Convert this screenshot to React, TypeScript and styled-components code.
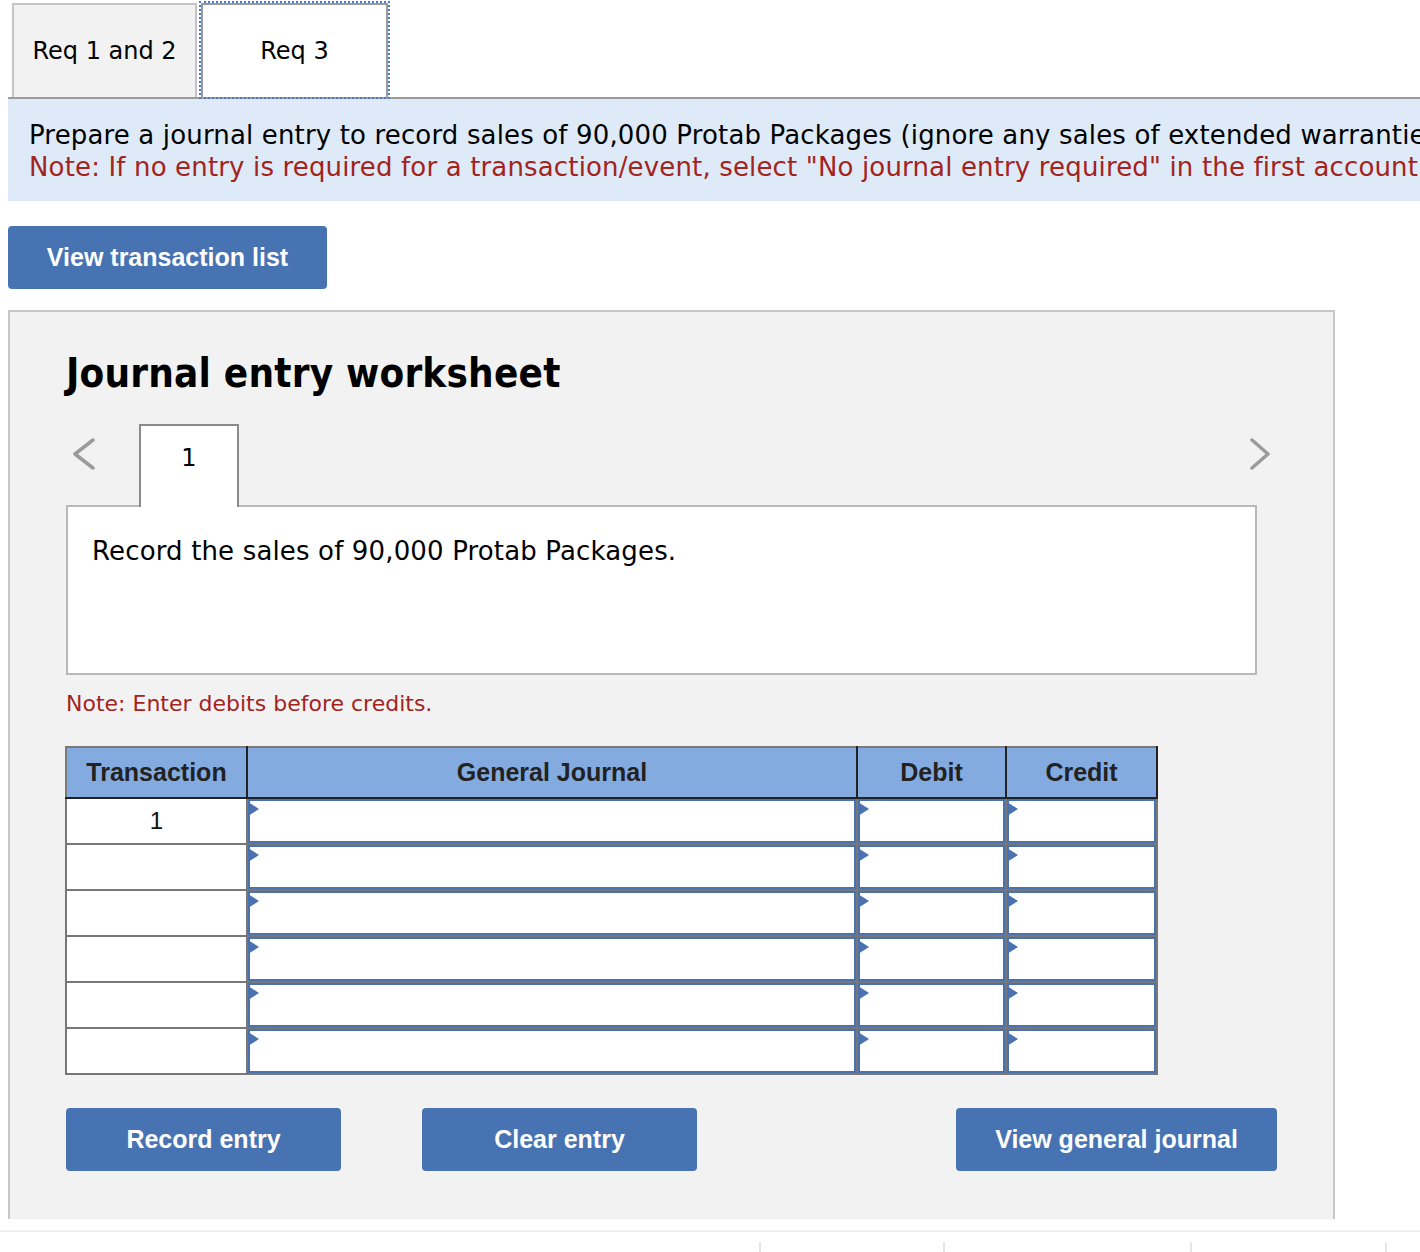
import React from 'react';
import styled, { createGlobalStyle } from 'styled-components';

const GlobalStyle = createGlobalStyle`
  html, body {
    margin: 0;
    padding: 0;
    background: #ffffff;
    overflow: hidden;
  }
  body {
    font-family: "DejaVu Sans", Verdana, sans-serif;
    color: #000;
  }
  * { box-sizing: border-box; }
`;

const Page = styled.div`
  width: 1420px;
  overflow: hidden;
`;

const Top = styled.div`
  padding-left: 8px;
`;

const TabBar = styled.div`
  display: flex;
  align-items: flex-end;
  gap: 4px;
  height: 99px;
  padding-left: 4px;
  border-bottom: 2px solid #9b9b9b;
`;

const ReqTab = styled.div<{ $active?: boolean; $width: number }>`
  width: ${p => p.$width}px;
  height: 94px;
  display: flex;
  align-items: center;
  justify-content: center;
  font-size: 24px;
  background: ${p => (p.$active ? '#ffffff' : '#f2f2f2')};
  border: 2px solid ${p => (p.$active ? '#9a9a9a' : '#c4c4c4')};
  border-bottom: none;
  ${p => p.$active && 'outline: 2px dotted #4a78c8;'}
`;

const Instructions = styled.div`
  background: #deeaf8;
  padding: 20px 0 18px 21px;
  font-size: 26px;
  line-height: 32px;
  letter-spacing: 0.15px;
  white-space: nowrap;
  overflow: hidden;
`;

const RedText = styled.div`
  color: #a3231d;
`;

const BlueButton = styled.button<{ $width: number }>`
  width: ${p => p.$width}px;
  height: 63px;
  border: none;
  border-radius: 4px;
  background: #4773b3;
  color: #ffffff;
  font-family: "Liberation Sans", Arial, sans-serif;
  font-weight: 700;
  font-size: 25px;
  padding: 0;
  cursor: pointer;
`;

const ListButton = styled(BlueButton)`
  margin-top: 25px;
  display: block;
`;

const Panel = styled.section`
  margin-top: 21px;
  width: 1327px;
  background: #f2f2f2;
  border: 2px solid #c7c7c7;
  border-bottom: none;
  padding: 37px 56px 48px;
`;

const Heading = styled.h2`
  margin: 0;
  font-family: "DejaVu Sans Condensed", "DejaVu Sans", sans-serif;
  font-stretch: condensed;
  font-weight: 700;
  font-size: 40px;
  line-height: 48px;
  letter-spacing: 0.2px;
`;

const NavRow = styled.div`
  margin-top: 27px;
  display: flex;
  align-items: flex-start;
`;

const Chevron = styled.svg<{ $side: 'left' | 'right' }>`
  width: 24px;
  height: 32px;
  ${p => (p.$side === 'left' ? 'margin: 14px 44px 0 5px;' : 'margin: 14px 5px 0 auto;')}
`;

const EntryTab = styled.div`
  position: relative;
  z-index: 1;
  width: 100px;
  height: 83px;
  margin-bottom: -2px;
  background: #ffffff;
  border: 2px solid #8a8a8a;
  border-bottom: none;
  padding-top: 18px;
  text-align: center;
  font-size: 24px;
  line-height: 28px;
`;

const ContentBox = styled.div`
  width: 1191px;
  height: 170px;
  background: #ffffff;
  border: 2px solid #b8b8b8;
  padding: 28px 24px;
  font-size: 26px;
  line-height: 32px;
  letter-spacing: 0.15px;
`;

const Note = styled(RedText)`
  margin-top: 15px;
  font-size: 22px;
  line-height: 28px;
`;

const Journal = styled.table`
  margin-top: 28px;
  margin-left: -1px;
  width: 1091px;
  border-collapse: collapse;
  table-layout: fixed;
  font-family: "Liberation Sans", Arial, sans-serif;
`;

const HeadCell = styled.th<{ $first?: boolean }>`
  height: 51px;
  padding: 0;
  background: #84abe0;
  color: #222222;
  font-size: 25px;
  font-weight: 700;
  text-align: center;
  border: 2px solid #222222;
  border-top-color: #7a7a7a;
  ${p => p.$first && 'border-left-color: #7a7a7a;'}
`;

const BodyCell = styled.td`
  height: 46px;
  padding: 0;
  background: #ffffff;
  border: 2px solid #777777;
  text-align: center;
  font-size: 24px;
  color: #111;
`;

const InputBox = styled.div`
  position: relative;
  height: 44px;
  border: 2px solid #4a72b0;
  background: #ffffff;

  &::before {
    content: '';
    position: absolute;
    left: -2px;
    top: 1px;
    border-left: 11px solid #4a72b0;
    border-top: 7px solid transparent;
    border-bottom: 7px solid transparent;
  }
`;

const ButtonRow = styled.div`
  margin-top: 33px;
  display: flex;
  gap: 81px;
`;

const PushRight = styled.div`
  margin-left: auto;
`;

const Footer = styled.div`
  margin-top: 11px;
  border-top: 2px solid #efefef;
  display: grid;
  grid-template-columns: 759px 184px 247px 195px 1fr;
  height: 24px;
`;

const FooterCell = styled.div<{ $divider?: boolean }>`
  margin-top: 10px;
  ${p => p.$divider && 'border-left: 2px solid #e6e6e6;'}
`;

const rows = ['1', '', '', '', '', ''];

export default function App() {
  return (
    <Page>
      <GlobalStyle />
      <Top>
        <TabBar>
          <ReqTab $width={185}>Req 1 and 2</ReqTab>
          <ReqTab $width={187} $active>Req 3</ReqTab>
        </TabBar>
        <Instructions>
          <div>
            Prepare a journal entry to record sales of 90,000 Protab Packages (ignore any sales of extended warranties).
          </div>
          <RedText>
            Note: If no entry is required for a transaction/event, select "No journal entry required" in the first account field.
          </RedText>
        </Instructions>
        <ListButton $width={319}>View transaction list</ListButton>

        <Panel>
          <Heading>Journal entry worksheet</Heading>
          <NavRow>
            <Chevron $side="left" viewBox="0 0 24 32">
              <polyline points="22,2 4,16 22,30" fill="none" stroke="#9b9b9b" strokeWidth="3.5" strokeLinecap="round" strokeLinejoin="round" />
            </Chevron>
            <EntryTab>1</EntryTab>
            <Chevron $side="right" viewBox="0 0 24 32">
              <polyline points="4,2 20,16 4,30" fill="none" stroke="#9b9b9b" strokeWidth="3.5" strokeLinecap="round" strokeLinejoin="round" />
            </Chevron>
          </NavRow>
          <ContentBox>Record the sales of 90,000 Protab Packages.</ContentBox>
          <Note>Note: Enter debits before credits.</Note>

          <Journal>
            <colgroup>
              <col style={{ width: 181 }} />
              <col style={{ width: 610 }} />
              <col style={{ width: 149 }} />
              <col style={{ width: 151 }} />
            </colgroup>
            <thead>
              <tr>
                <HeadCell $first>Transaction</HeadCell>
                <HeadCell>General Journal</HeadCell>
                <HeadCell>Debit</HeadCell>
                <HeadCell>Credit</HeadCell>
              </tr>
            </thead>
            <tbody>
              {rows.map((label, i) => (
                <tr key={i}>
                  <BodyCell>{label}</BodyCell>
                  <BodyCell><InputBox /></BodyCell>
                  <BodyCell><InputBox /></BodyCell>
                  <BodyCell><InputBox /></BodyCell>
                </tr>
              ))}
            </tbody>
          </Journal>

          <ButtonRow>
            <BlueButton $width={275}>Record entry</BlueButton>
            <BlueButton $width={275}>Clear entry</BlueButton>
            <PushRight>
              <BlueButton $width={321}>View general journal</BlueButton>
            </PushRight>
          </ButtonRow>
        </Panel>
      </Top>
      <Footer>
        <FooterCell />
        <FooterCell $divider />
        <FooterCell $divider />
        <FooterCell $divider />
        <FooterCell $divider />
      </Footer>
    </Page>
  );
}
